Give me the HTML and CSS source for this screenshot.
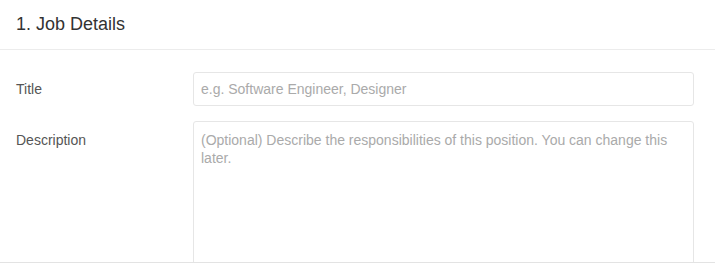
FILE: index.html
```html
<!DOCTYPE html>
<html lang="en">
<head>
  <meta charset="UTF-8">
  <meta name="viewport" content="width=device-width, initial-scale=1.0">
  <title>Job Details</title>
  <link rel="stylesheet" href="styles.css">
</head>
<body>
  <div class="panel">
    <div class="panel-header">
      <h2>1. Job Details</h2>
    </div>
    <div class="panel-body">
      <div class="form-row">
        <label for="jobTitle">Title</label>
        <input id="jobTitle" type="text" placeholder="e.g. Software Engineer, Designer">
      </div>
      <div class="form-row form-row-top">
        <label for="jobDescription">Description</label>
        <textarea id="jobDescription" placeholder="(Optional) Describe the responsibilities of this position. You can change this later."></textarea>
      </div>
    </div>
  </div>
</body>
</html>
```

FILE: styles.css
```css
body {
  font-family: "Liberation Sans", Arial, sans-serif;
  margin: 0;
  padding: 0;
  background: #fff;
  color: #333;
}
.panel {
  height: 263px;
  box-sizing: border-box;
  border-bottom: 1px solid #e3e3e3;
  overflow: hidden;
}
.panel-header {
  height: 50px;
  box-sizing: border-box;
  padding: 0 16px;
  border-bottom: 1px solid #ececec;
  display: flex;
  align-items: center;
}
.panel-header h2 {
  margin: 0;
  font-size: 18px;
  font-weight: normal;
  color: #333;
}
.panel-body {
  padding: 22px 21px 0 16px;
}
.form-row {
  display: flex;
  align-items: center;
  margin-bottom: 15px;
}
.form-row-top {
  align-items: flex-start;
}
.form-row label {
  width: 177px;
  flex-shrink: 0;
  font-size: 14px;
  color: #555;
}
.form-row-top label {
  padding-top: 11px;
}
.form-row input,
.form-row textarea {
  flex: 1;
  box-sizing: border-box;
  border: 1px solid #e6e6e6;
  border-radius: 3px;
  padding: 0 7px;
  font-family: inherit;
  font-size: 14px;
  color: #333;
  background: #fff;
  outline: none;
}
.form-row input {
  height: 34px;
}
.form-row textarea {
  height: 170px;
  padding-top: 9px;
  line-height: 18px;
  resize: none;
}
.form-row input::placeholder,
.form-row textarea::placeholder {
  color: #aaa;
}
```
